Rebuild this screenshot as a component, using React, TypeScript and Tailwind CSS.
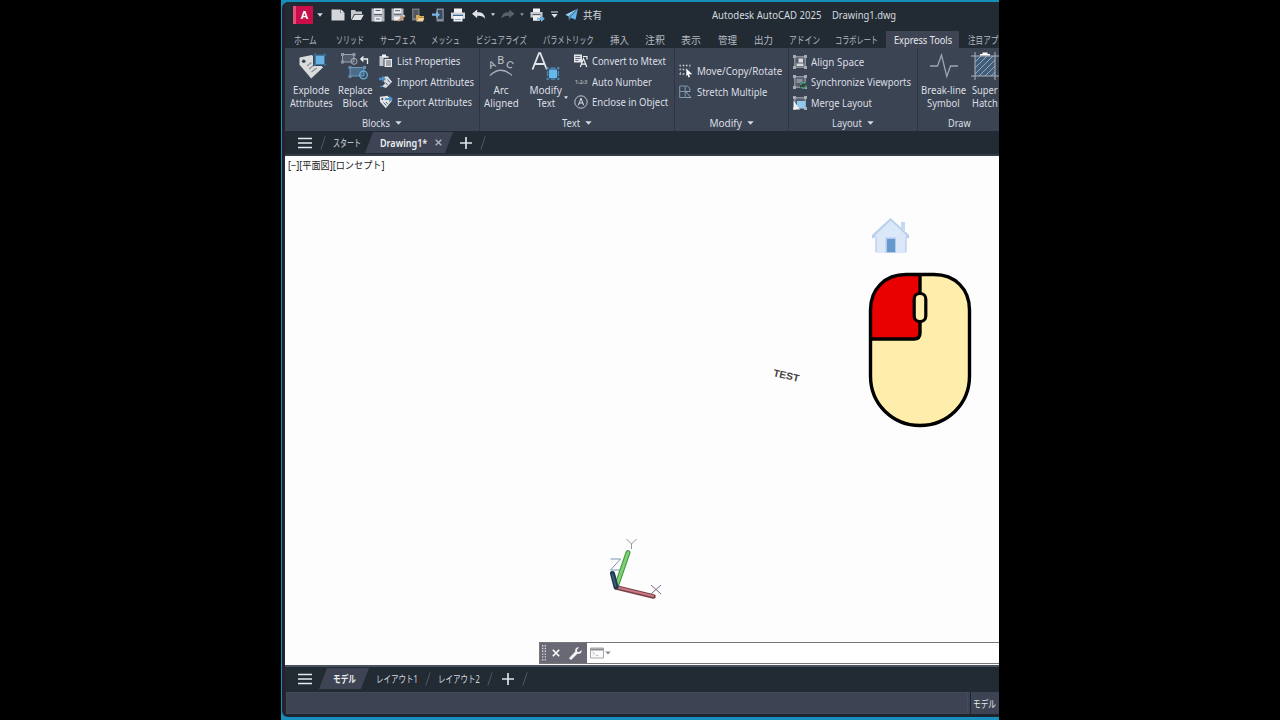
import { useLayoutEffect, useRef, useState } from 'react';
import type { ReactNode } from 'react';
import clsx from 'clsx';

// The UI font runs narrower than the installed ones, so labels are squeezed to a set width.
function Label({ w, children, className }: { w: number; children: string; className?: string }) {
  const ref = useRef<HTMLSpanElement>(null);
  const [scale, setScale] = useState(1);

  useLayoutEffect(() => {
    if (ref.current) setScale(w / ref.current.offsetWidth);
  }, [w, children]);

  return (
    <span className={clsx('block shrink-0 text-left', className)} style={{ width: w }}>
      <span ref={ref} className="inline-block origin-left whitespace-nowrap" style={{ transform: `scaleX(${scale})` }}>
        {children}
      </span>
    </span>
  );
}

function Icon({ w, h, className, children }: { w: number; h: number; className?: string; children: ReactNode }) {
  return (
    <svg width={w} height={h} viewBox={`0 0 ${w} ${h}`} fill="none" className={clsx('block shrink-0', className)}>
      {children}
    </svg>
  );
}

function Caret({ className }: { className?: string }) {
  return (
    <Icon w={7} h={4} className={className}>
      <path d="M.3.2h6.4L3.5 3.8z" fill="currentColor" />
    </Icon>
  );
}

function SmallCaret({ className }: { className?: string }) {
  return (
    <Icon w={4} h={3} className={className}>
      <path d="M0 .2h4L2 2.9z" fill="currentColor" />
    </Icon>
  );
}

const Burger = ({ className }: { className?: string }) => (
  <Icon w={14} h={12} className={className}>
    <path d="M0 1.5h14M0 6h14M0 10.5h14" stroke="#e8eaee" strokeWidth="1.7" />
  </Icon>
);

const Plus = ({ className }: { className?: string }) => (
  <Icon w={12} h={12} className={className}>
    <path d="M0 6h12M6 0v12" stroke="#dfe2e7" strokeWidth="1.7" />
  </Icon>
);

const Slash = ({ className }: { className?: string }) => (
  <Icon w={6} h={14} className={className}>
    <path d="M.8 13.5 5.2.5" stroke="#515964" strokeWidth="1" />
  </Icon>
);

function TitleBar() {
  return (
    <div className="flex h-[25px] items-center pl-2 text-[#d5d9df]">
      <div className="flex h-[18px] w-5 shrink-0 items-center justify-center border-l-[3px] border-[#e84b74] bg-[#c80f49] font-['Liberation_Sans'] text-[11px] font-bold text-white">
        A
      </div>
      <Icon w={6} h={4} className="ml-[4px]">
        <path d="M.2.3h5.600L3 3.800z" fill="currentColor" />
      </Icon>
      {/* new */}
      <Icon w={14} h={14} className="ml-[8px]">
        <path d="M.5 1.5h9v3.6h4v7.4H.5z" fill="#d3d6da" />
        <path d="m10 1.5 3.7 3.2H10z" fill="#f2f3f5" />
      </Icon>
      {/* open */}
      <Icon w={15} h={14} className="ml-[5px]">
        <path d="M1 12V2h4l1 1.5h6V6H4.3L1 12z" fill="#c5c9ce" />
        <path d="M4.8 6.7h9L10.9 12H1.8z" fill="#dde0e3" />
      </Icon>
      {/* save */}
      <Icon w={14} h={14} className="ml-[6px]">
        <path d="M.5.5h13v13H.5z" fill="#aeb3bc" />
        <path d="M3 .5h8v5.2H3zM3.5 9h7v4.5h-7z" fill="#eceef0" />
        <path d="M3 6.5h8M4.5 2.5h5M5 11h4" stroke="#58606d" />
      </Icon>
      {/* save as */}
      <Icon w={15} h={14} className="ml-[6px]">
        <path d="M.5.5h12v12H.5z" fill="#aeb3bc" />
        <path d="M3 .5h7.3v5H3zM3 8.5h6v4H3z" fill="#eceef0" />
        <path d="M3 6.3h7.5M4 2.7h5" stroke="#58606d" />
        <path d="m6.5 12.8 5.4-5.5 1.7 1.6-5.2 4.5z" fill="#c99765" />
        <path d="m11.7 7.4 1-1 1.7 1.6-.8.9z" fill="#e9e2d8" />
      </Icon>
      {/* open from device */}
      <Icon w={14} h={14} className="ml-[5px]">
        <path d="M1 .5h7.5v12H1z" fill="#777b80" />
        <path d="M2.4 2h4.8v8H2.4z" fill="#4f565f" />
        <path d="M5 7h3l1 1h4v1.7H7L5 13z" fill="#d9ac57" />
        <path d="M7.3 10h6L12 13.5H5.3z" fill="#f2d699" />
      </Icon>
      {/* save to device */}
      <Icon w={13} h={14} className="ml-[7px]">
        <path d="M4.5.5h7.3v13H4.5z" fill="#858d99" />
        <path d="M6 2h4.5v9H6z" fill="#3c4c60" />
        <path d="M0 5.6h4V3.3l4 3.4-4 3.4V7.8H0z" fill="#79b4e5" />
      </Icon>
      {/* print */}
      <Icon w={14} h={14} className="ml-[6px]">
        <path d="M3 .5h8V5H3z" fill="#f2f3f4" />
        <path d="M0 4.5h14v6.2H0z" fill="#d3d7dc" />
        <path d="M2.5 8h9v5.5h-9z" fill="#f4f5f6" />
        <path d="M2 7.4h10" stroke="#3a6d93" strokeWidth="1.4" />
        <path d="M4 11.5h6" stroke="#85afcf" />
      </Icon>
      {/* undo */}
      <Icon w={14} h={11} className="ml-[7px]">
        <path d="M0 4.7 5.2.5v2.8c4.700-.2 7.500 1.600 8 6.500-1.800-2.500-4-3.300-8-3.100v2.500z" fill="#dfe2e7" />
      </Icon>
      <SmallCaret className="ml-[5px]" />
      {/* redo */}
      <Icon w={14} h={11} className="ml-[6px] text-[#59606b]">
        <path d="M13.5 4.7 8.3.5v2.8c-4.700-.2-7.500 1.600-8 6.500 1.800-2.500 4-3.300 8-3.100v2.500z" fill="currentColor" />
      </Icon>
      <SmallCaret className="ml-[5px] text-[#8a9099]" />
      {/* batch plot */}
      <Icon w={15} h={14} className="ml-[6px]">
        <path d="M3 .5h7v4H3z" fill="#f2f3f4" />
        <path d="M.5 4h12v5.600H.5z" fill="#c5cad0" />
        <path d="M3 7.300h7v5.500H3z" fill="#eceef0" />
        <path d="M2.500 6.600h8" stroke="#4c5560" />
        <path d="M7 9.800h4V7.500l3.800 3.300L11 14v-2.300H7z" fill="#6eb2e2" />
      </Icon>
      <Icon w={7} h={7} className="ml-[6px]">
        <path d="M0 1h7" stroke="#dfe2e7" />
        <path d="M.3 3h6.400L3.500 6.700z" fill="#dfe2e7" />
      </Icon>
      <Icon w={13} h={13} className="ml-[7px]">
        <path d="M13 .5.3 6.700l3.200 1.500z" fill="#9bd3f5" />
        <path d="M13 .5 3.500 8.200 4 12.500l2-2.800 4.500 2z" fill="#64b3e4" />
        <path d="M13 .5 5 9l-.8 3" stroke="#27526f" strokeWidth=".7" />
      </Icon>
      <Label w={19} className="ml-[5px] text-[10px]">共有</Label>
      <Label w={109} className="ml-[110px] text-[10px]">Autodesk AutoCAD 2025</Label>
      <Label w={64} className="ml-[11px] text-[10px]">Drawing1.dwg</Label>
    </div>
  );
}

const menuTabs = [
  { label: 'ホーム', w: 23, box: 42 },
  { label: 'ソリッド', w: 28, box: 44 },
  { label: 'サーフェス', w: 36, box: 51 },
  { label: 'メッシュ', w: 29, box: 45 },
  { label: 'ビジュアライズ', w: 51, box: 67 },
  { label: 'パラメトリック', w: 51, box: 67 },
  { label: '挿入', w: 19, box: 35 },
  { label: '注釈', w: 20, box: 36 },
  { label: '表示', w: 20, box: 37 },
  { label: '管理', w: 19, box: 36 },
  { label: '出力', w: 19, box: 35 },
  { label: 'アドイン', w: 31, box: 46 },
  { label: 'コラボレート', w: 43, box: 51 },
];

function MenuTabs() {
  return (
    <div className="mt-1 flex h-[17px] items-center pl-[9px] text-[10px] text-[#b3b9c1]">
      {menuTabs.map((tab) => (
        <div key={tab.label} className="shrink-0" style={{ width: tab.box }}>
          <Label w={tab.w}>{tab.label}</Label>
        </div>
      ))}
      <div className="flex h-[17px] w-[73px] shrink-0 items-center justify-center bg-[#3e4453] text-[#e6e8ec]">
        <Label w={58}>Express Tools</Label>
      </div>
      <Label w={38} className="ml-[9px]">注目アプリ</Label>
    </div>
  );
}

type Command = { label: string; w: number; icon: ReactNode };

function SmallButton({ label, w, icon }: Command) {
  return (
    <div className="flex h-[20.5px] items-center">
      <div className="mr-1 flex w-[14px] shrink-0 justify-center">{icon}</div>
      <Label w={w}>{label}</Label>
    </div>
  );
}

function LargeButton({ lines, widths, icon, className }: { lines: string[]; widths: number[]; icon: ReactNode; className?: string }) {
  return (
    <div className={clsx('flex shrink-0 flex-col items-center', className)}>
      <div className="flex h-9 items-center">{icon}</div>
      {lines.map((line, i) => (
        <Label key={line} w={widths[i]} className="h-[13px] leading-[13px]">
          {line}
        </Label>
      ))}
    </div>
  );
}

function Panel({ title, w, width, caret = true, children }: { title: string; w: number; width: number; caret?: boolean; children: ReactNode }) {
  return (
    <div className="flex shrink-0 flex-col border-r border-[#2d3542]" style={{ width }}>
      <div className="flex h-[67px] shrink-0">{children}</div>
      <div className="flex h-4 items-center justify-center">
        <Label w={w}>{title}</Label>
        {caret && <Caret className="ml-[5px] text-[#d5d9df]" />}
      </div>
    </div>
  );
}

const blockCommands: Command[] = [
  {
    label: 'List Properties',
    w: 63,
    icon: (
      <Icon w={14} h={14}>
        <path d="M.5 2h9v10h-9z" fill="#c3c8ce" />
        <path d="M3 .5h4V3H3z" fill="#f3f4f5" />
        <path d="M5 4.5h8.5v9H5z" fill="#e8eaed" stroke="#3b4453" />
        <path d="M7 7h5M7 9h5M7 11h5" stroke="#58606d" />
      </Icon>
    ),
  },
  {
    label: 'Import Attributes',
    w: 77,
    icon: (
      <Icon w={14} h={14}>
        <path d="M3 2.300 8.500 1.300l4.700 5.500L7 13 3 11.500l3-3z" fill="#dadde1" />
        <path d="M0 2.800h3.500V.800L7 4 3.500 7.200v-2H0z" fill="#4a90c4" />
        <path d="M1 11.500h3" stroke="#4a90c4" strokeWidth="1.200" />
        <path d="m8.500 4.500 2.500 3M6.500 7.500 8.500 10" stroke="#59616e" />
      </Icon>
    ),
  },
  {
    label: 'Export Attributes',
    w: 75,
    icon: (
      <Icon w={14} h={14}>
        <path d="M.8 1.800 8.500.800l4.500 5L6.800 13.200 1 6.800z" fill="#dfe1e4" />
        <circle cx="3.300" cy="4" r="1" fill="#3b4453" />
        <path d="M6 3.200h4.300V.6L13.900 4l-3.600 3.200V5H6z" fill="#4a94c7" />
        <path d="m4.500 7.500 2.800 3M6.800 7l2 2.200" stroke="#59616e" />
      </Icon>
    ),
  },
];

const textCommands: Command[] = [
  {
    label: 'Convert to Mtext',
    w: 74,
    icon: (
      <Icon w={14} h={14}>
        <path d="M0 .5h8v8H0z" fill="#e4e6e9" />
        <path d="M1.3 2.5h5M1.3 4.5h5M1.3 6.5h3" stroke="#69717d" />
        <path d="m6.300 13 3.200-8.400L12.800 13M7.500 10.200h4M9 2.500h4v3" stroke="#f1f2f3" strokeWidth="1.200" />
      </Icon>
    ),
  },
  {
    label: 'Auto Number',
    w: 60,
    icon: <span className="whitespace-nowrap text-[6px] tracking-[-0.3px] text-[#c6cad0]">1›2›3</span>,
  },
  {
    label: 'Enclose in Object',
    w: 76,
    icon: (
      <Icon w={14} h={14}>
        <circle cx="7" cy="7" r="6.200" stroke="#c3c8cf" />
        <path d="m4.300 10.300 2.700-7 2.700 7M5.300 8h3.400" stroke="#e1e4e8" />
      </Icon>
    ),
  },
];

const modifyCommands: Command[] = [
  {
    label: 'Move/Copy/Rotate',
    w: 85,
    icon: (
      <Icon w={14} h={14}>
        <path d="M.5 1.500h11M.5 5.500h7M.5 10h6" stroke="#d5d9de" strokeWidth="1.600" strokeDasharray="1.600 1.600" />
        <path d="M1.500 1v10M10.500 1v4" stroke="#9aa2ad" strokeDasharray="1.500 2" />
        <path d="m7.300 4.500 6 5.800H10l1 2.800-1.400.5-1.100-2.800-1.200 1.400z" fill="#fff" />
      </Icon>
    ),
  },
  {
    label: 'Stretch Multiple',
    w: 70,
    icon: (
      <Icon w={14} h={14}>
        <path d="M.7 1h5.500v5.500H.7zM.7 6.500h5.500v6H.7z" stroke="#7d99b0" />
        <path d="M6.500 1C10 1 11 3 11 6.500H6.500M6.500 6.500 12 12.500H6.500" stroke="#8fa5b8" />
      </Icon>
    ),
  },
];

const Viewport = ({ children }: { children?: ReactNode }) => (
  <Icon w={14} h={14}>
    <path d="M1.800 1.800h10.400v10.400H1.800z" fill="#565e6b" stroke="#aab0b9" />
    <path d="M0 0h3v3H0zM11 0h3v3h-3zM0 11h3v3H0zM11 11h3v3h-3z" fill="#a7adb6" />
    {children}
  </Icon>
);

const layoutCommands: Command[] = [
  {
    label: 'Align Space',
    w: 53,
    icon: (
      <Viewport>
        <path d="M3.500 8.500h7V11h-7zM5.500 3.500H10v4H5.500z" fill="#d7dade" />
      </Viewport>
    ),
  },
  {
    label: 'Synchronize Viewports',
    w: 100,
    icon: (
      <Viewport>
        <path d="M3.500 4h6v4h-6z" fill="#8a919c" />
        <circle cx="10.300" cy="10.300" r="3.500" fill="#344541" />
        <path d="M7.600 10a2.800 2.800 0 0 1 4.800-1.600M13 10.500a2.800 2.800 0 0 1-4.800 1.800" stroke="#4fa67f" strokeWidth="1.400" />
      </Viewport>
    ),
  },
  {
    label: 'Merge Layout',
    w: 61,
    icon: (
      <Viewport>
        <path d="M4 5h8.500v7H4z" fill="#8fc9ee" />
        <path d="M.5 4.500 7 13.500H.5z" fill="#eef0f2" />
      </Viewport>
    ),
  },
];

const explodeIcon = (
  <Icon w={29} h={29} className="ml-[2px]">
    <path d="M1.500 5.500 14 3l11 12.500-11.800 11L1.500 12.800z" fill="#d9dbdd" />
    <circle cx="5.700" cy="9.300" r="1.800" fill="#3b4453" />
    <path d="m9 14 4.500-3.500M11 17l6-4.700M13.500 20l5.200-4" stroke="#8c9299" strokeWidth="1.200" />
    <path d="M15 1h13v13H15z" fill="#3b4453" />
    <path d="M17.500 3.500H26V12h-8.500z" fill="#68b2e2" />
    <path d="M17 1v13M26.500 1v13M15.500 3h13M15.500 12.500h13" stroke="#39769f" />
  </Icon>
);

const replaceIcon = (
  <Icon w={28} h={29}>
    <path d="M1.500 2.500H13v7.500H1.500z" fill="#525b69" stroke="#9ba3ae" />
    <circle cx="13" cy="9.300" r="3" stroke="#a9b0b9" />
    <path d="M0 1h3v3H0zM11.500 1h3v3h-3zM0 8.500h3v3H0z" fill="#8c95a1" />
    <path d="M26.500 12V7H20m2.500-2.500L19.800 7l2.700 2.500" stroke="#eceef1" strokeWidth="1.300" />
    <path d="M9 15.500h14v8.500H9z" fill="#4b6d89" stroke="#6c9abd" />
    <circle cx="22.500" cy="23" r="3.800" stroke="#66b0df" strokeWidth="1.300" />
    <path d="M7.500 14h3v3h-3zM22 14h3v3h-3zM7.500 23h3v3h-3z" fill="#688cab" />
  </Icon>
);

// Letters sit on the arc, so each gets its own tilt
const arcIcon = (
  <div className="flex w-[28px] flex-col items-center">
    <div className="flex h-[12px] items-start font-['Liberation_Sans'] text-[10px] leading-[10px] text-[#c9cdd3]">
      <span className="mt-[4px] -rotate-[22deg]">A</span>
      <span className="mx-[2px]">B</span>
      <span className="mt-[4px] rotate-[22deg]">C</span>
    </div>
    <Icon w={24} h={9}>
      <path d="M1 7.500q11-10.500 22 0" stroke="#a8afb8" strokeWidth="1.200" />
    </Icon>
  </div>
);

const modifyTextIcon = (
  <Icon w={29} h={29}>
    <path d="M1.500 17.500 8 1.200h1.300l6.500 16.300M4 12h9.300" stroke="#e1e4e8" strokeWidth="1.800" />
    <path d="M18 17.500h8V26h-8z" fill="#65b8ec" />
    <path d="M15.500 16.300h13M15.500 27h13M16.600 15v13.500M27.300 15v13.500" stroke="#4c88b1" strokeWidth="1.400" strokeDasharray="2.500 1.500 5 1.500 2.500" />
  </Icon>
);

const breakLineIcon = (
  <Icon w={28} h={26}>
    <path d="M0 13h7.500l4-11 5.300 21.500L20.500 13H28" stroke="#9ca4ae" strokeWidth="1.300" />
  </Icon>
);

const hatchIcon = (
  <Icon w={28} h={28}>
    <path d="M4 4h20v20H4z" fill="#445c76" />
    <path d="m4 10 6-6M4 16 16 4M4 22 22 4M8 24 24 8M14 24l10-10M20 24l4-4" stroke="#87adcb" />
    <path d="M0 4h28M0 24h28M4 0v28M24 0v28" stroke="#aab1ba" />
    <path d="M9 3.500V2h2.500V.5h5V2H19v1.500z" fill="#fff" />
  </Icon>
);

function Ribbon() {
  return (
    <div className="flex h-[83px] overflow-hidden bg-[#3b4453] text-[10px] text-[#dcdfe4]">
      <Panel title="Blocks" w={28} width={195}>
        <LargeButton lines={['Explode', 'Attributes']} widths={[36, 43]} icon={explodeIcon} className="w-[52px]" />
        <LargeButton lines={['Replace', 'Block']} widths={[35, 25]} icon={replaceIcon} className="w-9" />
        <div className="ml-[6px] pt-[3px]">
          {blockCommands.map((c) => <SmallButton key={c.label} {...c} />)}
        </div>
      </Panel>
      <Panel title="Text" w={18} width={195}>
        <LargeButton lines={['Arc', 'Aligned']} widths={[15, 35]} icon={arcIcon} className="w-[42px]" />
        <LargeButton lines={['Modify', 'Text']} widths={[32, 18]} icon={modifyTextIcon} className="ml-[5px] w-[37px]" />
        <SmallCaret className="mt-12" />
        <div className="ml-[6px] pt-[3px]">
          {textCommands.map((c) => <SmallButton key={c.label} {...c} />)}
        </div>
      </Panel>
      <Panel title="Modify" w={32} width={114}>
        <div className="ml-1 pt-[13px]">
          {modifyCommands.map((c) => <SmallButton key={c.label} {...c} />)}
        </div>
      </Panel>
      <Panel title="Layout" w={30} width={129}>
        <div className="ml-1 pt-[3.500px]">
          {layoutCommands.map((c) => <SmallButton key={c.label} {...c} />)}
        </div>
      </Panel>
      <Panel title="Draw" w={23} width={84} caret={false}>
        <LargeButton lines={['Break-line', 'Symbol']} widths={[45, 33]} icon={breakLineIcon} className="w-[51px]" />
        <LargeButton lines={['Super', 'Hatch']} widths={[26, 26]} icon={hatchIcon} className="ml-[3px] w-[26px]" />
      </Panel>
    </div>
  );
}

function FileTabs() {
  return (
    <div className="flex h-[25px] items-center border-b-2 border-[#343b48] bg-[#222b34] pl-[13px] text-[10px] text-[#d5d9df]">
      <Burger />
      <Slash className="ml-2" />
      <Label w={28} className="ml-[7px]">スタート</Label>
      <div className="ml-1 flex h-[21px] w-[88px] items-center bg-[#3e4453] pl-[15px] [clip-path:polygon(8px_0,100%_0,calc(100%-8px)_100%,0_100%)]">
        <Label w={47} className="font-semibold text-[#eceef1]">Drawing1*</Label>
        <Icon w={7} h={7} className="ml-[8px]">
          <path d="m.7.7 5.600 5.600M6.300.7.7 6.300" stroke="#b0b6bf" strokeWidth="1.300" />
        </Icon>
      </div>
      <Plus className="ml-[7px]" />
      <Slash className="ml-[8px]" />
    </div>
  );
}

const Home = () => (
  <Icon w={40} h={38}>
    <path d="M5 17h30v19H5z" fill="#dce7f8" />
    <path d="M30 5h4v9l-4-3.500z" fill="#c4d8f0" />
    <path d="M19.500 1 1 18v3.500l4-1.500v-2L19.500 5 34 18v2l4 1.500V18z" fill="#b8d0ec" />
    <path d="M19.500 3.500 4.500 18v3h30.500v-3z" fill="#dbe8f9" />
    <path d="M5 20v15M35 20v15" stroke="#bfd4ee" strokeWidth="1.500" />
    <path d="M14.500 20.500h10.500V36H14.500z" fill="#b2cdec" />
    <path d="M16 22h8v13h-8z" fill="#6598cd" />
  </Icon>
);

const Mouse = () => (
  <Icon w={104} h={156}>
    <path d="M2.500 38C2.500 17 17 2.500 38 2.500h28C87 2.500 101.500 17 101.500 38v66c0 28-22 49.500-49.500 49.500S2.500 132 2.500 104z" fill="#ffedac" />
    <path d="M2.500 38C2.500 17 17 2.500 38 2.500h14V61q0 6-6 6H2.500z" fill="#e90101" />
    <path d="M52 2.500V61q0 6-6 6H2.500" stroke="#000" strokeWidth="3.400" />
    <path d="M2.500 38C2.500 17 17 2.500 38 2.500h28C87 2.500 101.500 17 101.500 38v66c0 28-22 49.500-49.500 49.500S2.500 132 2.500 104z" stroke="#000" strokeWidth="3.400" />
    <rect x="46.200" y="21.500" width="11.600" height="28" rx="5.500" fill="#ffedac" stroke="#000" strokeWidth="3.200" />
  </Icon>
);

const UcsAxes = () => (
  <Icon w={56} h={66}>
    <g strokeLinecap="round">
      <path d="M11.500 50 23 16.500" stroke="#4c974a" strokeWidth="5" />
      <path d="M11.500 50 23 16.500" stroke="#7bd672" strokeWidth="2.600" />
      <path d="M11.500 51.500 48.500 60.500" stroke="#77414a" strokeWidth="4.600" />
      <path d="M12.500 51.500 48 60" stroke="#ca7883" strokeWidth="2.200" />
      <path d="M11 51 7.500 37.500" stroke="#22394f" strokeWidth="5" />
      <path d="M10.500 50 7.500 38.500" stroke="#3b5d7d" strokeWidth="1.800" />
    </g>
    <path d="m21.500 3 5 5 5-5M26.500 8v5" stroke="#8b9c8b" />
    <path d="M5.500 23h10L5.500 34h10" stroke="#7799b0" />
    <path d="m46 49 10 9M56 49l-10 9" stroke="#7b6b88" />
  </Icon>
);

function Canvas() {
  return (
    <div className="relative h-[509px] overflow-hidden bg-[#fdfdfd] text-black">
      <Label w={96} className="ml-[3px] pt-[2px] text-[10px] text-[#222]">[−][平面図][ロンセプト]</Label>
      <div className="absolute left-[586px] top-[61px]"><Home /></div>
      <div className="absolute left-[582.500px] top-[115.500px]"><Mouse /></div>
      <div className="absolute left-[488px] top-[213px] rotate-[13deg] font-['Liberation_Sans'] text-[10px] font-bold text-[#444]">
        <Label w={27}>TEST</Label>
      </div>
      <div className="absolute left-[320px] top-[380px]"><UcsAxes /></div>

      {/* Command line */}
      <div className="absolute bottom-[1px] left-[254px] right-0 flex h-[22px] items-center border-y border-l border-[#777] bg-white">
        <div className="flex h-full w-[47px] shrink-0 items-center bg-[#686975] pl-[2px]">
          <Icon w={4} h={16}>
            <path d="M.7 0v16M3.300 0v16" stroke="#e3e3e7" strokeWidth="1.200" strokeDasharray="1.400 1.400" />
          </Icon>
          <Icon w={8} h={8} className="ml-[6px]">
            <path d="m.8.8 6.400 6.400M7.200.8.8 7.200" stroke="#fff" strokeWidth="1.600" />
          </Icon>
          <Icon w={13} h={13} className="ml-[9px]">
            <path d="M12.500 3 10.300 5 8.200 4.700 7.900 2.700 10 .5C7.500-.2 5.600 2 6.300 4.600L.6 10.400c-1 1.300.6 3 2 2l5.800-5.700c2.700.7 4.800-1.200 4.100-3.700z" fill="#f1f1f3" />
          </Icon>
        </div>
        <Icon w={14} h={12} className="ml-[3px]">
          <path d="M.5 1h13v10H.5z" fill="#fafafa" stroke="#a8a8ac" />
          <path d="M.5 2.500h13" stroke="#8c8c92" strokeWidth="2" />
          <path d="m2.500 5 2 1.500-2 1.500M5.500 8.500h3" stroke="#aaa" strokeWidth=".7" />
        </Icon>
        <Icon w={6} h={4} className="ml-px">
          <path d="M.2.5h5.600L3 3.500z" fill="#88888e" />
        </Icon>
      </div>
    </div>
  );
}

function LayoutTabs() {
  return (
    <div className="flex h-[25px] items-center bg-[#222b34] pb-[2px] pl-[13px] text-[10px] text-[#d5d9df]">
      <Burger />
      <div className="ml-[7px] flex h-[21px] w-[50px] items-center justify-center bg-[#3e4453] [clip-path:polygon(8px_0,100%_0,calc(100%-8px)_100%,0_100%)]">
        <Label w={23} className="font-semibold text-[#eceef1]">モデル</Label>
      </div>
      <Label w={42} className="ml-[7px]">レイアウト1</Label>
      <Slash className="ml-[7px]" />
      <Label w={42} className="ml-[7px]">レイアウト2</Label>
      <Slash className="ml-[7px]" />
      <Plus className="ml-[9px]" />
      <Slash className="ml-[8px]" />
    </div>
  );
}

export default function App() {
  return (
    <div className="h-[720px] w-[1280px] overflow-hidden bg-black pl-[281px] font-['Noto_Sans','Noto_Sans_CJK_JP',sans-serif]">
      <div className="h-full w-[718px] overflow-hidden bg-[#178fbd] pb-[3px] pl-[1px] pt-[2px]">
        <div className="h-full rounded-bl-[6px] rounded-tl-[6px] bg-[#20242f] pl-[3px] leading-[14px]">
          <div className="h-[46px] overflow-hidden rounded-tl-[4px] bg-[#222b34]">
            <TitleBar />
            <MenuTabs />
          </div>
          <Ribbon />
          <FileTabs />
          <Canvas />
          <div className="h-[2px] bg-[#4a5260]" />
          <LayoutTabs />
          <div className="ml-px flex h-[22px] bg-[#3d4352]">
            <div className="w-[682px] border border-[#444a59]" />
            <div className="ml-[2px] flex flex-1 items-center overflow-hidden border-l border-[#20242f] pl-[2px] pt-px text-[10px] text-[#e6e8ec]">
              <Label w={23}>モデル</Label>
            </div>
          </div>
        </div>
      </div>
    </div>
  );
}
